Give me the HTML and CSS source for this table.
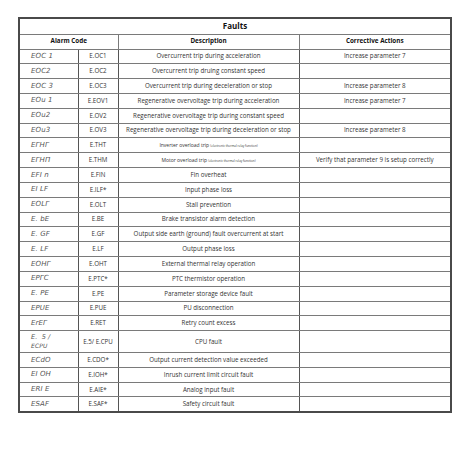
FILE: index.html
```html
<!DOCTYPE html>
<html>
<head>
<meta charset="utf-8">
<link rel="stylesheet" href="styles.css">
</head>
<body>
<div class="page">
<table class="faults">
  <colgroup>
    <col class="c1"><col class="c2"><col class="c3"><col class="c4">
  </colgroup>
  <tr class="title"><th colspan="4">Faults</th></tr>
  <tr class="head"><th colspan="2">Alarm Code</th><th>Description</th><th>Corrective Actions</th></tr>
  <tr><td class="seg">EOC 1</td><td>E.OC1</td><td>Overcurrent trip during acceleration</td><td>Increase parameter 7</td></tr>
  <tr><td class="seg">EOC2</td><td>E.OC2</td><td>Overcurrent trip druing constant speed</td><td></td></tr>
  <tr><td class="seg">EOC 3</td><td>E.OC3</td><td>Overcurrent trip during deceleration or stop</td><td>Increase parameter 8</td></tr>
  <tr><td class="seg">EOu 1</td><td>E.EOV1</td><td>Regenerative overvoltage trip during acceleration</td><td>Increase parameter 7</td></tr>
  <tr><td class="seg">EOu2</td><td>E.OV2</td><td>Regenerative overvoltage trip during constant speed</td><td></td></tr>
  <tr><td class="seg">EOu3</td><td>E.OV3</td><td>Regenerative overvoltage trip during deceleration or stop</td><td>Increase parameter 8</td></tr>
  <tr><td class="seg">EΓHΓ</td><td>E.THT</td><td class="sm">Inverter overload trip <span class="tiny">(electronic thermal relay function)</span></td><td></td></tr>
  <tr><td class="seg">EΓHΠ</td><td>E.THM</td><td class="sm">Motor overload trip <span class="tiny">(electronic thermal relay function)</span></td><td>Verify that parameter 9 is setup correctly</td></tr>
  <tr><td class="seg">EFI n</td><td>E.FIN</td><td>Fin overheat</td><td></td></tr>
  <tr><td class="seg">EI LF</td><td>E.ILF*</td><td>Input phase loss</td><td></td></tr>
  <tr><td class="seg">EOLΓ</td><td>E.OLT</td><td>Stall prevention</td><td></td></tr>
  <tr><td class="seg">E. bE</td><td>E.BE</td><td>Brake transistor alarm detection</td><td></td></tr>
  <tr><td class="seg">E. GF</td><td>E.GF</td><td>Output side earth (ground) fault overcurrent at start</td><td></td></tr>
  <tr><td class="seg">E. LF</td><td>E.LF</td><td>Output phase loss</td><td></td></tr>
  <tr><td class="seg">EOHΓ</td><td>E.OHT</td><td>External thermal relay operation</td><td></td></tr>
  <tr><td class="seg">EPΓC</td><td>E.PTC*</td><td>PTC thermistor operation</td><td></td></tr>
  <tr><td class="seg">E. PE</td><td>E.PE</td><td>Parameter storage device fault</td><td></td></tr>
  <tr><td class="seg">EPUE</td><td>E.PUE</td><td>PU disconnection</td><td></td></tr>
  <tr><td class="seg">ErEΓ</td><td>E.RET</td><td>Retry count excess</td><td></td></tr>
  <tr class="tall"><td class="seg two"><span class="l1">E.&nbsp;&nbsp;5 /</span><span class="l2">ECPU</span></td><td>E.5/ E.CPU</td><td>CPU fault</td><td></td></tr>
  <tr class="low"><td class="seg">ECdO</td><td>E.CDO*</td><td>Output current detection value exceeded</td><td></td></tr>
  <tr class="low"><td class="seg">EI OH</td><td>E.IOH*</td><td>Inrush current limit circuit fault</td><td></td></tr>
  <tr class="low"><td class="seg">ERI E</td><td>E.AIE*</td><td>Analog input fault</td><td></td></tr>
  <tr class="low"><td class="seg">ESAF</td><td>E.SAF*</td><td>Safety circuit fault</td><td></td></tr>
</table>
</div>
</body>
</html>
```

FILE: styles.css
```css
html, body {
  margin: 0;
  padding: 0;
  background: #ffffff;
}

.page {
  padding: 17px 0 0 18px;
}

.faults {
  border-collapse: collapse;
  table-layout: fixed;
  width: 432px;
  border: 2px solid #4a4a4a;
  font-family: "Open Sans", "Liberation Sans", sans-serif;
  font-size: 6.2px;
  color: #333;
}

.c1 { width: 59px; }
.c2 { width: 40px; }
.c3 { width: 181px; }
.c4 { width: 152px; }

.faults th,
.faults td {
  border: 1px solid #7a7a7a;
  padding: 0 2px;
  text-align: center;
  vertical-align: middle;
  white-space: nowrap;
  overflow: hidden;
  line-height: 1;
}

.faults td {
  border-left-color: #555;
  border-right-color: #555;
}

.faults tr {
  height: 14.84px;
}

.faults tr.low {
  height: 14.75px;
}

.faults tr.tall {
  height: 22px;
}

.title {
  height: 16px !important;
}

.title th {
  font-size: 8px;
  font-weight: 700;
  color: #111;
}

.head {
  height: 15px !important;
}

.head th {
  font-size: 6.3px;
  font-weight: 700;
  color: #111;
}

.faults td.seg {
  text-align: left;
  padding-left: 11px;
  font-family: "DejaVu Sans", sans-serif;
  font-style: italic;
  font-size: 7px;
  color: #555;
  letter-spacing: 0.1px;
}

.seg.two .l1,
.seg.two .l2 {
  display: block;
}

.seg.two .l1 {
  font-size: 6.5px;
  margin-bottom: 2px;
}

.seg.two .l2 {
  font-size: 6px;
}

.faults td.sm {
  font-size: 5px;
}

.tiny {
  font-size: 3px;
}
```
